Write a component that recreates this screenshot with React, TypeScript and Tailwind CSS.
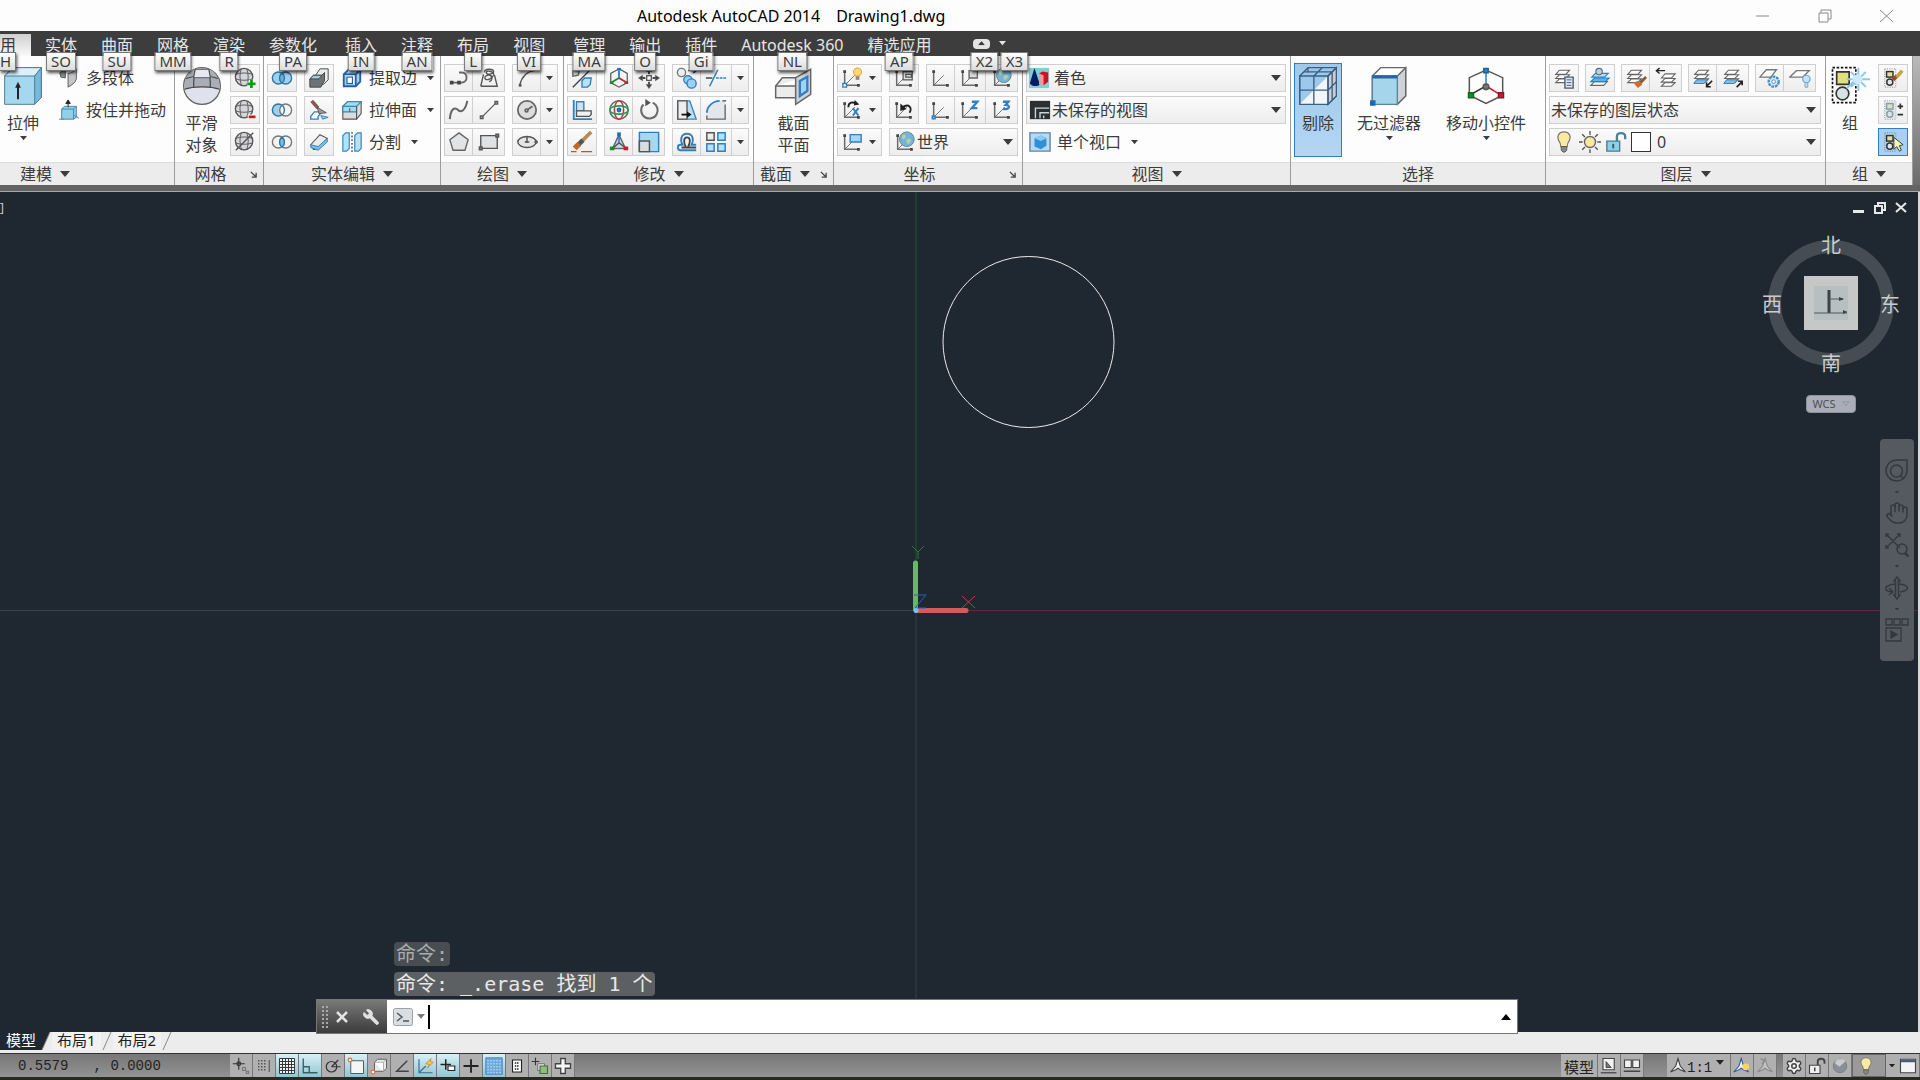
import { ReactNode } from "react";
import { Hand, Settings, Wrench } from "lucide-react";

const axes = (
  <g stroke="#6a6a6a" strokeWidth="1.6" fill="none">
    <path d="M4 4v16h16" />
    <path d="M4 20l11-11" strokeWidth="1" />
    <path d="M2.5 5h3M19 18.5v3" strokeWidth="3" stroke="#444" />
  </g>
);

const globe = (
  <>
    <circle cx="11" cy="11" r="9.500" fill="#d4d6da" stroke="#555" strokeWidth="1.4" />
    <path d="M2 8c5-2 13-2 18 0M1.500 13c6 2 13 2 19 0M8 2C6 8 6 12 8 20M14 2c2 6 2 12 0 18" fill="none" stroke="#555" />
  </>
);

const layers = (
  <g fill="#fff" stroke="#666" strokeWidth="1.200">
    <path d="M3 17l4-4h11l-4 4z" />
    <path d="M3 12.500l4-4h11l-4 4z" />
    <path d="M3 8l4-4.500h11L14 8z" />
  </g>
);

const selectShapes = (
  <>
    <rect x="3" y="2" width="12" height="20" fill="none" stroke="#777" strokeWidth="1" strokeDasharray="1 1.500" />
    <rect x="5" y="5" width="7" height="6" fill="#e3e09a" stroke="#333" strokeWidth="1.600" />
    <circle cx="8.500" cy="16.500" r="3.300" fill="#dfe6e8" stroke="#333" strokeWidth="1.600" />
  </>
);

const icons: Record<string, ReactNode> = {
  extrude: (
    <g strokeWidth=".6">
      <path d="M1 6l5-5h17v18l-4 4H1z" fill="#a5d8ee" stroke="#4c7f9c" />
      <path d="M1 6l5-5h17l-4 5z" fill="#d8f1fb" stroke="#4c7f9c" />
      <path d="M19 6l4-5v18l-4 4z" fill="#79b8d8" stroke="#4c7f9c" />
      <path d="M9 20V11" stroke="#222" strokeWidth="1.200" />
      <path d="M7.300 13L9 9.500l1.700 3.500z" fill="#222" />
    </g>
  ),
  polysolid: (
    <g fill="#c4c6c9" stroke="#555">
      <path d="M2 6l6-3v9l-5-1z" fill="#8a8d91" />
      <path d="M11 7c4 0 6-2 9-5v11c-1 4-4 6-9 9z" />
    </g>
  ),
  presspull: (
    <>
      <path d="M4 11l3-3h13v12l-3 2H4z" fill="#8fd0ec" stroke="#47809c" />
      <path d="M4 11h13v11M17 11l3-3M1 22h5M18 18l5 3" fill="none" stroke="#47809c" />
      <path d="M11 9V4M8.500 5L11 1l2.500 4z" fill="#222" stroke="#222" />
    </>
  ),
  smooth: (
    <>
      <circle cx="12" cy="12" r="11" fill="#dfe1ec" stroke="#666" strokeWidth=".8" />
      <path d="M1.500 14C1 5 6 1.200 12 1.200S23 5 22.500 14c-5-2-16-2-21 0z" fill="#a9adb6" />
      <path d="M8 2C7 5 7 9 7 13M16 2c1 3 1 7 1 11M2.500 7.500c5-2 14-2 19 0M1.500 14c5-2 16-2 21 0" fill="none" stroke="#444" strokeWidth=".7" />
      <path d="M8 2h8l1 5H7z" fill="#e8e9ee" stroke="#444" strokeWidth=".5" />
    </>
  ),
  meshAdd: (
    <>
      {globe}
      <path d="M19 14v9M14.500 18.500h9" stroke="#fff" strokeWidth="5" />
      <path d="M19 14v9M14.500 18.500h9" stroke="#0c9a1c" strokeWidth="3" />
    </>
  ),
  meshRemove: (
    <>
      {globe}
      <path d="M15 19.500h8.500" stroke="#fff" strokeWidth="5" />
      <path d="M16 19.500h7.500" stroke="#d1121f" strokeWidth="3" />
    </>
  ),
  meshOff: (
    <>
      {globe}
      <path d="M2 21L21 2" stroke="#555" strokeWidth="1.500" />
    </>
  ),
  union: (
    <g stroke="#3077a8" strokeWidth="1.500">
      <circle cx="8" cy="12" r="6.500" fill="#9fd0ee" />
      <circle cx="16" cy="12" r="6.500" fill="#9fd0ee" />
      <path d="M12 6.500a7 7 0 0 1 0 11a7 7 0 0 1 0-11z" fill="#6cb1dd" />
    </g>
  ),
  subtract: (
    <g strokeWidth="1.500">
      <circle cx="8" cy="12" r="6.500" fill="#9fd0ee" stroke="#3077a8" />
      <circle cx="16" cy="12" r="6.500" fill="#f5f5f5" stroke="#777" />
      <path d="M12 6.500a7 7 0 0 1 0 11" fill="none" stroke="#3077a8" />
    </g>
  ),
  intersect: (
    <g strokeWidth="1.500" stroke="#777" fill="none">
      <circle cx="8" cy="12" r="6.500" />
      <circle cx="16" cy="12" r="6.500" />
      <path d="M12 6.500a7 7 0 0 1 0 11a7 7 0 0 1 0-11z" fill="#7cc0ea" stroke="#2f77a8" />
    </g>
  ),
  interfere: (
    <g stroke="#444">
      <path d="M9 8l4-6h9v12l-5 5H9z" fill="#ececec" />
      <path d="M2 13l4-4h9l3-3v9l-4 7H2z" fill="#6f7276" />
      <path d="M2 13l4-4h9l-3 4z" fill="#9ccbe5" />
    </g>
  ),
  paintSolid: (
    <g>
      <path d="M3 19l4-5h8l-4 5v3H3z" fill="#fff" stroke="#2f7fc1" strokeWidth="1.500" />
      <path d="M14 18l8 2-6 2z" fill="#8fd0ec" stroke="#2f7fc1" />
      <path d="M4 2l7 8" stroke="#8a5a52" strokeWidth="4" />
      <path d="M10 9l10 6-8 1z" fill="#999" stroke="#555" />
    </g>
  ),
  chamfer: (
    <g stroke="#555">
      <path d="M3 15L13 4l8 4-10 12H6z" fill="#ececec" strokeWidth="1.200" />
      <path d="M3 15l8 2 10-9v4L11 21l-8-3z" fill="#79c1e8" stroke="#2f7fa8" />
    </g>
  ),
  edges: (
    <g fill="#fff" stroke="#1f5fae" strokeWidth="2">
      <path d="M3 8l5-5h13v13l-5 5H3z" fill="#a9cdf0" />
      <path d="M3 8h13v13M16 8l5-5" />
      <rect x="6.500" y="11" width="6" height="7" strokeWidth="1.300" />
    </g>
  ),
  extrudeFace: (
    <g stroke="#555" strokeWidth="1.200">
      <path d="M2 8l5-5h15v13l-5 6H2z" fill="#dcdcdc" />
      <path d="M2 8l5-5h15l-5 5zM2 8h15v6H2z" fill="#9fdcf4" stroke="#3b88a8" />
      <path d="M17 8v14M9.500 14V10" />
    </g>
  ),
  separate: (
    <g stroke="#3b88b8" strokeWidth="1.300" fill="#b5e2f6">
      <path d="M2 5l3-3h4v17l-3 3H2z" />
      <path d="M15 5l3-3h4v17l-3 3h-4z" />
      <path d="M12 1v22" stroke="#333" strokeDasharray="2 2" />
    </g>
  ),
  polyline: (
    <g fill="none" stroke="#666" strokeWidth="2">
      <path d="M4 17h11c7 0 7-11 0-11h-3" />
      <path d="M2 17h4M10 17h4" stroke="#444" strokeWidth="4" />
    </g>
  ),
  helix: (
    <g fill="none" stroke="#555" strokeWidth="1.500">
      <path d="M3 21h18L18 9M3 21L6 8" />
      <path d="M7 6c0-5 10-4 10-1s-8 4-8 1 10-1 8 3-7 6-9 4 2-5 5-4 3 6-1 7" />
    </g>
  ),
  arc: (
    <g fill="none" stroke="#555" strokeWidth="1.500">
      <path d="M4 20C6 12 11 5 20 4" />
      <path d="M3 20h3" strokeWidth="3" />
    </g>
  ),
  spline: <path d="M2 22C3 9 8 9 11 12s8 1 10-10" fill="none" stroke="#666" strokeWidth="2.200" />,
  line: (
    <g stroke="#555" strokeWidth="1.300" fill="#999">
      <path d="M4 20L20 4" />
      <path d="M2.500 18.500h3v3h-3zM18.500 2.500h3v3h-3z" />
    </g>
  ),
  circle: (
    <g stroke="#666" strokeWidth="1.900" fill="#ddd">
      <circle cx="12" cy="12" r="10" />
      <path d="M12 12l6-4" />
      <circle cx="11.500" cy="12.500" r="1.500" />
    </g>
  ),
  polygon: <path d="M12 2l10 7.500L18.500 21h-13L2 9.500z" fill="#e1e3e5" stroke="#666" strokeWidth="1.500" />,
  rect: (
    <g stroke="#555" strokeWidth="1.500" fill="#dfe1e3">
      <path d="M3 5h18v14H3z" />
      <path d="M1.500 17.500h3v3h-3zM19.500 3.500h3v3h-3z" fill="#888" />
    </g>
  ),
  ellipse: (
    <g stroke="#555" strokeWidth="1.600" fill="#e6e6e6">
      <ellipse cx="12" cy="12" rx="10" ry="6" />
      <path d="M12 6v7M9.500 12h5" />
      <circle cx="22" cy="12" r="1.200" />
    </g>
  ),
  mirror: (
    <g strokeWidth="1.500">
      <path d="M2 4h7l-1 5-6 1z" fill="#ddd" stroke="#666" />
      <path d="M2 22L21 3" stroke="#444" />
      <path d="M12 15l3-3h7l-1 7-3 3h-6z" fill="#b9e3f8" stroke="#2f7fc1" />
    </g>
  ),
  gizmoMove: (
    <g fill="none" stroke="#555" strokeWidth="1.300">
      <path d="M12 2l9 5v10l-9 5-9-5V7z" />
      <path d="M12 12V4" stroke="#1d6fc0" strokeWidth="1.800" />
      <path d="M12 12l7 4" stroke="#c1202f" strokeWidth="1.800" />
      <path d="M12 12l-7 4" stroke="#188a28" strokeWidth="1.800" />
      <path d="M10 2.500h4" stroke="#1d6fc0" strokeWidth="3" />
      <path d="M18 17h4" stroke="#c1202f" strokeWidth="3" />
      <path d="M2 17h4" stroke="#188a28" strokeWidth="3" />
    </g>
  ),
  move: (
    <g stroke="#444" strokeWidth="2" fill="#444">
      <path d="M12 5v3M12 16v3M5 12h3M16 12h3" />
      <path d="M12 .5l3 4.500H9zM12 23.500l3-4.500H9zM.5 12L5 9v6zM23.500 12L19 9v6z" strokeWidth=".5" />
      <rect x="9.500" y="9.500" width="5" height="5" fill="#fff" strokeWidth="1.300" />
    </g>
  ),
  align: (
    <g strokeWidth="1.500">
      <path d="M3 1v21h20" fill="none" stroke="#2f7fc1" strokeWidth="2" />
      <rect x="6" y="3" width="8" height="10" fill="#c7e4f5" stroke="#4279a5" />
      <path d="M6 13h16v4l-2 2H6z" fill="#f2f2f2" stroke="#555" />
    </g>
  ),
  gizmoRotate: (
    <g fill="none" strokeWidth="1.700">
      <circle cx="12" cy="12" r="10" stroke="#666" />
      <ellipse cx="12" cy="12" rx="5" ry="10" stroke="#c03a44" />
      <ellipse cx="12" cy="12" rx="10" ry="4.500" stroke="#2c9a52" />
      <circle cx="12" cy="12" r="1.800" fill="#3d83c6" stroke="#2f5f9c" />
    </g>
  ),
  rotate: (
    <g fill="none" stroke="#6b6b6b" strokeWidth="2.200">
      <path d="M6 6a9 9 0 1 0 10-2" />
      <path d="M8 0v8l6-4z" fill="#555" stroke="none" />
    </g>
  ),
  erase: (
    <>
      <path d="M10 13L22 1" stroke="#b58d58" strokeWidth="4" />
      <path d="M7 16l6-6" stroke="#555" strokeWidth="5" />
      <path d="M4 19l5-5" stroke="#c8642a" strokeWidth="6" />
      <path d="M0 22.500h6M11 22.500h12" stroke="#b5592b" strokeWidth="1.500" />
    </>
  ),
  gizmoScale: (
    <g fill="none" strokeWidth="1.600">
      <path d="M12 4L5 19h14z" stroke="#666" fill="#c7dced" />
      <path d="M12 13V4" stroke="#1d6fc0" />
      <path d="M12 13l-7 6M12 13l8 6" stroke="#555" />
      <path d="M10 3.500h4" stroke="#1d6fc0" strokeWidth="4" />
      <path d="M2 19h5" stroke="#188a28" strokeWidth="4" />
      <path d="M17 19h5" stroke="#c1202f" strokeWidth="4" />
    </g>
  ),
  scale: (
    <g strokeWidth="1.600">
      <path d="M1.500 1.500h21v21h-21z" fill="#a7d8f2" stroke="#2f7fc1" />
      <path d="M1.500 11h11v11.500h-11z" fill="#d7dde0" stroke="#555" />
    </g>
  ),
  copy: (
    <g strokeWidth="1.500">
      <circle cx="6" cy="6" r="4.500" fill="#eee" stroke="#777" />
      <circle cx="13" cy="14" r="4.500" fill="#9bd2f2" stroke="#2f7fc1" />
      <circle cx="17" cy="18" r="5" fill="#9bd2f2" stroke="#2f7fc1" />
      <path d="M13 4h8M19 1.500L22 4l-3 2.500" fill="none" stroke="#333" />
    </g>
  ),
  trim: (
    <g fill="none" strokeWidth="1.800">
      <path d="M1 12h7" stroke="#555" />
      <path d="M12 12h12" stroke="#2f7fc1" strokeDasharray="3 1" />
      <path d="M5 21l9-18" stroke="#2f7fc1" />
    </g>
  ),
  stretch: (
    <g strokeWidth="1.500">
      <path d="M2 2h13l7 20H2z" fill="#bce0f3" stroke="#3b88b8" />
      <path d="M2 2h10v20H2z" fill="#eee" stroke="#555" />
      <path d="M6 17h9" stroke="#111" strokeWidth="2" />
      <path d="M12 13.500l5 3.500-5 3.500z" fill="#111" />
    </g>
  ),
  fillet: (
    <g fill="#e4e7e9" strokeWidth="1.500">
      <path d="M2 22V17C2 9 9 2 17 2h5v20z" stroke="none" />
      <path d="M22 6v16H2v-4" fill="none" stroke="#666" />
      <path d="M2 15C2 8 9 2 16 2" fill="none" stroke="#2f7fc1" strokeWidth="2" />
      <path d="M19 2h4" stroke="#555" />
    </g>
  ),
  offset: (
    <g fill="none" strokeWidth="2">
      <path d="M22 15h-5c3-6 1-12-5-12S4 9 7 15H5a3 3 0 0 0 0 6h17" stroke="#2f7fc1" />
      <path d="M22 18H13c3-6 3-11-1-11s-4 6-1 11H6" stroke="#444" />
    </g>
  ),
  array: (
    <g fill="#b9e1f7" stroke="#2f7fc1" strokeWidth="1.600">
      <path d="M2 2h8v8H2z" fill="#eee" stroke="#555" />
      <path d="M14 2h8v8h-8zM2 14h8v8H2zM14 14h8v8h-8z" />
    </g>
  ),
  section: (
    <g stroke="#666" strokeWidth=".9">
      <path d="M1 12l4-5h12v6l-3 6H1z" fill="#ececec" />
      <path d="M1 12h13l3-5" fill="#fff" />
      <path d="M13 7l9-5v15l-9 6z" fill="#cfd3d8" />
      <path d="M15.500 9l4.500-2.500V15l-4.500 3z" fill="#a2d3f2" stroke="#2f7fc1" strokeWidth="1.400" />
    </g>
  ),
  ucsIcon: (
    <>
      {axes}
      <path d="M2 18h4v4H2z" fill="#fff" stroke="#2f7fc1" strokeWidth="1.500" />
      <path d="M16 8h4v6h-4z" fill="#888" />
      <circle cx="18" cy="5.500" r="4.500" fill="#ffd977" stroke="#e09c2a" />
    </>
  ),
  ucsX: (
    <>
      {axes}
      <path d="M8 9c0-6 5-6 9-4" fill="none" stroke="#222" strokeWidth="2" />
      <path d="M15 1l5 5-6 1z" fill="#222" />
      <path d="M13 10l6 8M19 10l-6 8" stroke="#2f7fc1" strokeWidth="2.200" />
    </>
  ),
  ucsView: (
    <>
      {axes}
      <path d="M10 4h12v8H10z" fill="#a9d6f3" stroke="#2f7fc1" strokeWidth="1.500" />
    </>
  ),
  ucsNamed: (
    <>
      {axes}
      <path d="M11 5h10v9H11zM14 8h6v3h-6z" fill="#ddd" stroke="#555" strokeWidth="1.300" />
    </>
  ),
  ucsPrev: (
    <>
      {axes}
      <path d="M10 9c8-5 11 1 8 6" fill="none" stroke="#222" strokeWidth="2" />
      <path d="M8 5v8l7-2z" fill="#222" />
    </>
  ),
  ucs: axes,
  ucsObject: (
    <>
      {axes}
      <path d="M11 4h9v8h-9z" fill="#ddd" stroke="#666" strokeWidth="1.500" />
    </>
  ),
  ucsWorld: (
    <>
      {axes}
      <circle cx="14" cy="9" r="8" fill="#75b4d8" stroke="#5f8088" />
      <path d="M9 5c3-3 5 1 3 3s-4 1-3-3zM14 9c4-2 6 1 3 4s-4-2-3-4z" fill="#b5cfa8" />
    </>
  ),
  ucsOrigin: (
    <>
      {axes}
      <path d="M2.500 18.500h3v3h-3z" fill="#7db9e6" stroke="#2f7fc1" strokeWidth="1.500" />
    </>
  ),
  ucsZ: (
    <>
      {axes}
      <path d="M14 3h6l-6 7h6" fill="none" stroke="#2f7fc1" strokeWidth="2.500" />
    </>
  ),
  ucs3: (
    <>
      {axes}
      <path d="M13 3h6l-3 3.500c6 0 4 6-3 4" fill="none" stroke="#2f7fc1" strokeWidth="2.500" />
    </>
  ),
  shaded: (
    <>
      <path d="M1 1h22v22H1z" fill="#7fd0d4" />
      <path d="M7 1l6 18c-3 3-9 2-11-1z" fill="#0a1c66" />
      <path d="M12 7l4-2 6 1v10l-5 4-5-1z" fill="#e99a9a" />
      <path d="M12 7l4-2 6 1-5 3zM17 9l5-3v10l-5 4z" fill="#d2101c" />
    </>
  ),
  viewThumb: (
    <>
      <path d="M1 2h22v20H1z" fill="#2c2f31" />
      <path d="M7 21v-11h15M12 21v-6h10M16 21v-3" fill="none" stroke="#cfd2d4" strokeWidth="1.500" />
    </>
  ),
  viewport: (
    <>
      <path d="M1 2h22v20H1z" fill="#b9d9ee" stroke="#5c87a8" strokeWidth="1.500" />
      <path d="M6 8l7-3 6 3v8l-6 4-7-3z" fill="#2f8fd8" />
      <path d="M6 8l7-3 6 3-6 3z" fill="#8ccbf5" />
    </>
  ),
  cull: (
    <g stroke="#3c5f80" strokeWidth=".8" fill="none">
      <path d="M1 6l5-5h17v17l-5 5H1z" fill="#9cc8ec" />
      <path d="M1 23L18 6v17z" fill="#f3f6f9" stroke="none" />
      <path d="M18 6l5-5v17l-5 5z" fill="#c9ced6" />
      <path d="M1 6h17v17H1zM9.500 6v17M1 14.500h17M6 1v3M9.500 6l5-5M18 6l5-5M20.500 3.500v17M3.500 3.500h17M18 14.500l5-5" />
    </g>
  ),
  noFilter: (
    <g stroke="#666" strokeWidth=".8">
      <path d="M2 6l5-5h15v17l-5 5H2z" fill="#fff" />
      <path d="M17 6l5-5v17l-5 5z" fill="#cfd3d9" />
      <path d="M2 6h15v17H2z" fill="#a5d5ea" stroke="#5b8399" />
      <path d="M2 6.500h15" stroke="#2068ae" strokeWidth="2" />
      <path d="M1 21h2.500v2.500H1z" fill="#2068ae" stroke="#2068ae" />
    </g>
  ),
  gizmoBig: (
    <g fill="none" stroke="#555" strokeWidth=".9">
      <path d="M12 2.500L22 7v10.500l-10 5-10-5V7z" />
      <path d="M12 12V3" stroke="#2f7fc1" />
      <path d="M12 12l9 5.500" stroke="#c1202f" />
      <path d="M12 12l-9 5" stroke="#333" />
      <path d="M10.700 1.500h2.600v2.600h-2.600z" fill="#2f7fc1" stroke="#1f5f9c" />
      <path d="M19.500 16h3v3h-3z" fill="#c1202f" stroke="#8a1822" />
      <path d="M1.500 16h3v3h-3z" fill="#188a28" stroke="#116a1c" />
      <circle cx="12" cy="12.500" r="1.700" fill="#777" />
    </g>
  ),
  layerProps: (
    <>
      {layers}
      <path d="M13 11h9v12h-9z" fill="#dbe6f2" stroke="#4a5c70" strokeWidth="1.500" />
      <path d="M15 14h5M15 17h5M15 20h5" stroke="#4a5c70" />
    </>
  ),
  layerIso: (
    <g stroke="#666" strokeWidth="1.200" fill="#fff">
      <path d="M2 20l4-4h14l-4 4z" />
      <path d="M2 16l4-4h16l-4 4z" fill="#5fb2e6" stroke="#2f7fc1" />
      <path d="M3 11l4-4h14l-4 4z" fill="#b7dff6" stroke="#2f7fc1" />
      <circle cx="11" cy="5" r="3.500" fill="#a9d6f3" />
    </g>
  ),
  layerMatch: (
    <>
      {layers}
      <path d="M23 11l-7 7" stroke="#8c5a30" strokeWidth="3" />
      <path d="M9 17l6-2 4 4-5 4z" fill="#c8702f" />
    </>
  ),
  layerPrev: (
    <>
      <g transform="translate(4 4)">{layers}</g>
      <path d="M2 4h9M5 1L1.500 4 5 7" fill="none" stroke="#222" strokeWidth="1.500" />
    </>
  ),
  layerOffIso: (
    <>
      {layers}
      <path d="M2 18l3-4h12l-4 4z" fill="#7dc0ea" stroke="#2f7fc1" />
      <path d="M22 15l-6 6M16 17v4.500h4.500" fill="none" stroke="#222" strokeWidth="1.800" />
    </>
  ),
  layerOnIso: (
    <>
      {layers}
      <path d="M2 18l3-4h12l-4 4z" fill="#7dc0ea" stroke="#2f7fc1" />
      <path d="M16 22l6-6M17.500 15.500H22V20" fill="none" stroke="#222" strokeWidth="1.800" />
    </>
  ),
  layerFreeze: (
    <>
      <path d="M1 11l7-8h11l-6 8z" fill="#fff" stroke="#777" strokeWidth="1.500" />
      <circle cx="16" cy="16" r="5.500" fill="#cfe7f6" stroke="#4c8fc0" strokeWidth="2.500" strokeDasharray="3 1" />
      <circle cx="16" cy="16" r="2" fill="#fff" stroke="#4c8fc0" />
    </>
  ),
  layerOff: (
    <>
      <path d="M1 11l7-7h14l-7 7z" fill="#fff" stroke="#777" strokeWidth="1.500" />
      <circle cx="19" cy="13" r="4" fill="#c4e3f6" stroke="#6fa3c8" strokeWidth="1.300" />
      <path d="M17.500 17h3v5h-3z" fill="#c4e3f6" stroke="#6fa3c8" />
    </>
  ),
  bulb: (
    <>
      <path d="M12 1c6 0 8 5 6 9-2 3-2.500 4-2.500 7h-7C8.500 14 8 13 6 10 4 6 6 1 12 1z" fill="#fbe9a2" stroke="#777" strokeWidth="1.300" />
      <path d="M9 17h6v4l-2 2h-2l-2-2z" fill="#888" stroke="#555" />
    </>
  ),
  sun: (
    <>
      <circle cx="12" cy="12" r="6" fill="#fbe9a2" stroke="#666" strokeWidth="1.500" />
      <path d="M12 0v4M12 20v4M0 12h4M20 12h4M3.500 3.500l3 3M17.500 17.500l3 3M3.500 20.500l3-3M17.500 6.500l3-3" stroke="#555" strokeWidth="1.500" />
    </>
  ),
  unlock: (
    <>
      <path d="M13 11V6c0-5 9-5 9 0v3" fill="none" stroke="#4f7f92" strokeWidth="2.500" />
      <path d="M2 11h14v11H2z" fill="#8ccfe6" stroke="#4a7c90" strokeWidth="1.500" />
      <path d="M9 14v5" stroke="#2c5a6c" strokeWidth="2" />
    </>
  ),
  unlockPlain: (
    <>
      <path d="M13 11V6c0-5 9-5 9 0v3" fill="none" stroke="#444" strokeWidth="2.500" />
      <path d="M2 11h14v11H2z" fill="#f0f0f0" stroke="#444" strokeWidth="1.500" />
      <path d="M9 14v5" stroke="#444" strokeWidth="2" />
    </>
  ),
  group: (
    <>
      <path d="M1.500 1h14v21h-14z" fill="none" stroke="#111" strokeDasharray="1.500 1" />
      <path d="M4 3.500h7.500V11H4z" fill="#dfe07a" stroke="#333" />
      <circle cx="7.500" cy="16.500" r="3.800" fill="#d8e4e4" stroke="#333" />
      <path d="M10 13.500l6-6M17 1v14M10 8h14M12.500 3.500l9 9M21.500 3.500l-9 9" stroke="#8fc9ea" strokeWidth="1.200" />
      <circle cx="16.500" cy="8" r="3" fill="#c9eafc" />
    </>
  ),
  ungroup: (
    <>
      {selectShapes}
      <path d="M12 14l4-4" stroke="#b5401f" strokeWidth="4" />
      <path d="M16 11l6-7" stroke="#c2a44a" strokeWidth="4" />
    </>
  ),
  groupEdit: (
    <>
      {selectShapes}
      <path d="M3 2h12v20H3z" fill="#cfe3ee" opacity=".6" />
      <path d="M17 8h6M20 5v6M17 17h6" stroke="#333" strokeWidth="1.800" />
    </>
  ),
  groupSelect: (
    <>
      {selectShapes}
      <path d="M13 7v13l3-3 3 5 2-1-2-5 4-1z" fill="#f7f5b4" stroke="#333" />
    </>
  ),
  snapInfer: (
    <g stroke="#333" strokeWidth="1.500" fill="none">
      <path d="M1 9h16M9 1v16" />
      <circle cx="9" cy="9" r="2.500" />
      <path d="M14 14h4v4h-4zM19 19h3v3h-3z" stroke="#777" />
    </g>
  ),
  snap: (
    <g stroke="#555" strokeWidth="2" strokeDasharray="2 2">
      <path d="M4 5h12M4 9h12M4 13h12M4 17h12" />
      <path d="M19 4v16" strokeDasharray="none" strokeWidth="1.500" />
    </g>
  ),
  grid: (
    <path d="M2 2h20v20H2zM6 2v20M10 2v20M14 2v20M18 2v20M2 6h20M2 10h20M2 14h20M2 18h20" fill="#eef6f8" stroke="#333" strokeWidth="1.300" />
  ),
  ortho: <path d="M3 2v19h19M3 13h8v8" fill="none" stroke="#3c5c6c" strokeWidth="1.800" />,
  polar: (
    <g fill="none" stroke="#333" strokeWidth="1.600">
      <circle cx="10" cy="13" r="7" />
      <path d="M10 13l9-9M10 13h12" />
    </g>
  ),
  osnap: (
    <>
      <path d="M5 5h17v17H5z" fill="#f5f5f5" stroke="#555" strokeWidth="1.300" />
      <circle cx="4" cy="4" r="2.500" fill="#fff" stroke="#e0703a" strokeWidth="1.500" />
    </>
  ),
  osnap3d: (
    <>
      <path d="M6 7l4-4h12v12l-4 4H6z" fill="#e9e9e9" stroke="#555" strokeWidth="1.200" />
      <path d="M6 7h12v12M18 7l4-4" fill="#fff" stroke="#999" />
      <circle cx="4" cy="20" r="2.500" fill="#fff" stroke="#e0703a" strokeWidth="1.500" />
    </>
  ),
  otrack: <path d="M19 5L5 19h16" fill="none" stroke="#444" strokeWidth="2" />,
  ducs: (
    <>
      <path d="M4 3v18h18M4 21l9-9" fill="none" stroke="#3f6f8c" strokeWidth="1.600" />
      <path d="M20 2l-7 7 5 1-3 5 8-8-4-1z" fill="#ffc34a" stroke="#c78320" />
    </>
  ),
  dyn: (
    <g stroke="#222" strokeWidth="2" fill="#fff">
      <path d="M2 10h14M9 3v14" />
      <path d="M12 12h9v6h-9z" strokeWidth="1.500" />
    </g>
  ),
  lwt: <path d="M2 12h20M12 3v18" stroke="#222" strokeWidth="2.500" />,
  transparency: (
    <>
      <path d="M1 1h22v22H1z" fill="#6ea9dc" stroke="#3876b0" />
      <path d="M3 5h18M3 9h18M3 13h18M3 17h18M3 21h18" stroke="#b5d5f0" strokeWidth="2" strokeDasharray="2 2" />
    </>
  ),
  quickProps: (
    <g fill="#fff" stroke="#222" strokeWidth="1.500">
      <path d="M6 4h12v16H6z" />
      <path d="M9 8h6M9 12h6M9 16h6" strokeDasharray="2 1" strokeWidth="2" />
    </g>
  ),
  cycling: (
    <>
      <path d="M1 6h10M6 1v10" stroke="#333" strokeWidth="1.500" />
      <path d="M9 9h9v9H9z" fill="#e8e8e8" stroke="#555" />
      <path d="M12 12h10v10H12z" fill="#8dbf7c" stroke="#3f6f34" strokeWidth="1.500" />
    </>
  ),
  annoMonitor: <path d="M9 2h6v7h7v6h-7v7H9v-7H2V9h7z" fill="#f7f7f7" stroke="#444" strokeWidth="1.800" />,
  layoutSheet: (
    <>
      <path d="M4 2h15v15H4z" fill="#f2f2f2" stroke="#444" strokeWidth="1.500" />
      <path d="M8 6l7 8H8z" fill="#777" stroke="#333" />
      <path d="M1 21h21" stroke="#555" strokeWidth="2" />
    </>
  ),
  quickView: (
    <g fill="#f2f2f2" stroke="#444" strokeWidth="1.500">
      <path d="M2 4h9v10H2zM13 4h9v10h-9z" />
      <path d="M1 19h22" strokeWidth="2" />
    </g>
  ),
  anno: <path d="M12 2l3 10 7 8-7-3-3-2-3 2-7 3 7-8z" fill="#f2f2f2" stroke="#444" strokeWidth="1.500" />,
  annoLit: (
    <>
      <path d="M11 2l3 10 7 8-7-3-3-2-3 2-7 3 7-8z" fill="#f2f2f2" stroke="#2f5f9c" strokeWidth="1.500" />
      <circle cx="17" cy="13" r="4.500" fill="#ffd35c" />
    </>
  ),
  annoAuto: (
    <g fill="#c4c4c4" stroke="#8a8a8a" strokeWidth="1.500">
      <path d="M12 2l3 10 7 8-7-3-3-2-3 2-7 3 7-8z" />
      <path d="M6 2l5 3-3 4" fill="none" />
    </g>
  ),
  hardware: (
    <>
      <circle cx="12" cy="12" r="9" fill="#8a9096" stroke="#777" />
      <path d="M5 8l6 5 8-7-2-3H8z" fill="#c8cbcf" />
    </>
  ),
  cleanScreen: (
    <>
      <path d="M2 3h20v18H2z" fill="#f4f4f4" stroke="#444" strokeWidth="1.500" />
      <path d="M2 5.500h20" stroke="#4a5c7c" strokeWidth="3" />
    </>
  ),
  wheel: (
    <g fill="none" strokeWidth="1.500">
      <path d="M12 1h10v11a10.500 10.500 0 1 1-10-11z" />
      <circle cx="11.500" cy="12" r="6" />
      <path d="M15 16l4 4" />
    </g>
  ),
  zoomExtents: (
    <g fill="none" strokeWidth="1.500">
      <path d="M1 1l14 14M15 1L1 15M1 4V1h3M12 1h3v3M1 12v3h3" />
      <circle cx="17" cy="16" r="5" />
      <path d="M20 20l3.500 3.500" strokeWidth="2.500" />
    </g>
  ),
  orbit: (
    <g fill="none" strokeWidth="1.500">
      <path d="M12 1l3 4h-1.500v14H15l-3 4-3-4h1.500V5H9z" />
      <path d="M10 8c-9 1-12 5-7 7l4 1M14 8c10 1 12 6 1 8M4 12l4 4-4 3" />
    </g>
  ),
  motion: (
    <g fill="none" strokeWidth="1.300">
      <path d="M1 1h6v6H1zM9 1h6v6H9zM17 1h6v6h-6zM1 10h15v13H1z" />
      <path d="M6 13l6 3.500L6 20z" fill="#33393e" />
    </g>
  ),
};

function Icon({ name, className = "size-[22px]" }: { name: string; className?: string }) {
  return (
    <svg viewBox="0 0 24 24" className={`shrink-0 ${className}`} fill="none" aria-hidden="true">
      {icons[name]}
    </svg>
  );
}

function Caret({ className = "w-[7px]" }: { className?: string }) {
  return (
    <svg viewBox="0 0 10 6" className={`shrink-0 ${className}`} aria-hidden="true">
      <path d="M0 0h10L5 6z" fill="currentColor" />
    </svg>
  );
}

function KeyTip({ children }: { children: string }) {
  return (
    <span className="absolute top-[21px] left-1/2 z-20 h-[19px] -translate-x-1/2 border border-[#777] bg-gradient-to-b from-white to-[#dcdcdc] px-1 text-[15px] leading-4 text-[#3c3c3c] shadow-[1px_2px_3px_rgba(0,0,0,0.7)]">
      {children}
    </span>
  );
}

function Tools({ names, drop = false }: { names: string[]; drop?: boolean }) {
  return (
    <div className="flex h-7 w-fit divide-x divide-[#cfcfcf] border border-[#cfcfcf] bg-gradient-to-b from-[#fbfbfb] to-[#ededed]">
      {names.map((name, i) => (
        <button key={name} aria-label={name} className={`flex items-center justify-center ${i === 0 ? "w-7" : "w-[31px]"}`}>
          <Icon name={name} />
        </button>
      ))}
      {drop && (
        <button aria-label="more" className="flex w-4 items-center justify-center">
          <Caret />
        </button>
      )}
    </div>
  );
}

function DropTool({ name }: { name: string }) {
  return (
    <button
      aria-label={name}
      className="flex h-7 w-[45px] items-center gap-1.5 border border-[#cfcfcf] bg-gradient-to-b from-[#fbfbfb] to-[#ededed] pl-[3px]"
    >
      <Icon name={name} />
      <Caret />
    </button>
  );
}

function TextTool({ name, text, drop = false }: { name: string; text: string; drop?: boolean }) {
  return (
    <button className="flex h-7 items-center gap-1.5 whitespace-nowrap">
      <Icon name={name} />
      {text}
      {drop && <Caret className="ml-1 w-[7px]" />}
    </button>
  );
}

function BigTool({ name, lines, drop = false, className = "" }: { name: string; lines: string[]; drop?: boolean; className?: string }) {
  return (
    <button className={`flex shrink-0 flex-col items-center pt-0.5 ${className}`}>
      <Icon name={name} className="size-10" />
      <span className="mt-1.5 flex flex-col leading-[22px] whitespace-nowrap">
        {lines.map((line) => (
          <span key={line}>{line}</span>
        ))}
      </span>
      {drop && <Caret className="mt-0.5 w-[7px]" />}
    </button>
  );
}

function Combo({ label, value, children, className = "" }: { label: string; value: string; children?: ReactNode; className?: string }) {
  return (
    <div
      className={`relative flex h-7 items-center border border-[#cfcfcf] bg-gradient-to-b from-[#fbfbfb] to-[#ededed] ${className}`}
    >
      {children}
      <select aria-label={label} className="h-full min-w-0 flex-1 appearance-none bg-transparent outline-none">
        <option>{value}</option>
      </select>
      <Caret className="pointer-events-none absolute right-1 w-[10px]" />
    </div>
  );
}

function Panel({ title, menu = false, launcher = false, className = "", children }: { title: string; menu?: boolean; launcher?: boolean; className?: string; children: ReactNode }) {
  return (
    <section className={`flex flex-col border-r border-[#9c9c9c] ${className}`}>
      <div className="flex h-[106px] gap-[7px] bg-[#fdfdfd] pt-2 pl-[3px]">{children}</div>
      <div className="flex h-[23px] items-center border-t border-[#dcdcdc] bg-[#ececec]">
        <button className="flex flex-1 items-center justify-center gap-2 leading-5 whitespace-nowrap">
          {title}
          {menu && <Caret className="w-[10px]" />}
        </button>
        {launcher && (
          <button aria-label={`${title} launcher`} className="mr-1.5 ml-1">
            <svg viewBox="0 0 8 8" className="size-[7px]" fill="none" stroke="#444" strokeWidth="1.500">
              <path d="M1 1l5 5M7 2v5H2" />
            </svg>
          </button>
        )}
      </div>
    </section>
  );
}

const Column = ({ children, className = "" }: { children: ReactNode; className?: string }) => (
  <div className={`flex flex-col gap-1 ${className}`}>{children}</div>
);

const tabGroups = [
  [
    ["实体", "SO"],
    ["曲面", "SU"],
    ["网格", "MM"],
    ["渲染", "R"],
    ["参数化", "PA"],
  ],
  [
    ["插入", "IN"],
    ["注释", "AN"],
    ["布局", "L"],
    ["视图", "VI"],
  ],
  [
    ["管理", "MA"],
    ["输出", "O"],
    ["插件", "Gi"],
    ["Autodesk 360", "NL"],
    ["精选应用", "AP"],
  ],
];

function Tab({ text, tip }: { text: string; tip: string }) {
  return (
    <button className="relative px-3 pt-0.5 leading-6 whitespace-nowrap text-[#e6e6e6]">
      {text}
      <KeyTip>{tip}</KeyTip>
    </button>
  );
}

function TitleBar() {
  return (
    <header className="relative flex h-[31px] shrink-0 items-center bg-[#fdfdfd]">
      <h1 className="ml-[637px] flex gap-4 whitespace-nowrap text-black">
        <span>Autodesk AutoCAD 2014</span>
        <span>Drawing1.dwg</span>
      </h1>
      <div className="mr-[26px] ml-auto flex gap-12 text-[#888]">
        {["M0 7h13", "M1 4h9v9H1zM3 4V1h10v9h-3", "M0 1l13 12M13 1L0 13"].map((d, i) => (
          <button key={d} aria-label={["minimize", "restore", "close"][i]}>
            <svg viewBox="0 0 14 14" className="size-[14px]" fill="none" stroke="currentColor">
              <path d={d} />
            </svg>
          </button>
        ))}
      </div>
    </header>
  );
}

function TabBar() {
  return (
    <nav className="flex h-[25px] shrink-0 bg-[#3d3d3d]">
      <button className="relative mt-[3px] mr-0.5 w-[31px] bg-gradient-to-b from-[#cfcfcf] to-[#fafafa] text-left leading-[21px]">
        用
        <span className="absolute top-[18px] left-0 z-20 h-[19px] border border-l-0 border-[#777] bg-gradient-to-b from-white to-[#dcdcdc] pr-1 text-[15px] leading-4 shadow-[1px_2px_3px_rgba(0,0,0,0.7)]">
          H
        </span>
      </button>
      <div className="flex gap-1">
        {tabGroups.map((group, i) => (
          <div key={i} className="flex">
            {group.map(([text, tip]) => (
              <Tab key={tip} text={text} tip={tip} />
            ))}
          </div>
        ))}
      </div>
      <button aria-label="collapse ribbon" className="relative ml-[30px] w-[22px]">
        <span className="flex h-[10px] w-[17px] items-center justify-center rounded-sm bg-[#e4e4e4]">
          <Caret className="w-[7px] rotate-180" />
        </span>
        <KeyTip>X2</KeyTip>
      </button>
      <button aria-label="ribbon options" className="relative ml-1 w-[30px] text-[#e4e4e4]">
        <Caret className="w-[7px]" />
        <KeyTip>X3</KeyTip>
      </button>
    </nav>
  );
}

function Ribbon() {
  return (
    <div className="flex shrink-0 overflow-hidden bg-[#6b6b6b]">
      <Panel title="建模" menu className="w-[175px] shrink-0 [&>div:last-child]:pr-[84px]">
        <BigTool name="extrude" lines={["拉伸"]} drop className="w-10" />
        <Column className="ml-2">
          <TextTool name="polysolid" text="多段体" />
          <TextTool name="presspull" text="按住并拖动" />
        </Column>
      </Panel>
      <Panel title="网格" launcher className="w-[89px] shrink-0">
        <BigTool name="smooth" lines={["平滑", "对象"]} className="w-[45px] pl-0.5" />
        <Column>
          <Tools names={["meshAdd"]} />
          <Tools names={["meshRemove"]} />
          <Tools names={["meshOff"]} />
        </Column>
      </Panel>
      <Panel title="实体编辑" menu className="w-[177px] shrink-0">
        <Column>
          <Tools names={["union"]} />
          <Tools names={["subtract"]} />
          <Tools names={["intersect"]} />
        </Column>
        <Column>
          <Tools names={["interfere"]} />
          <Tools names={["paintSolid"]} />
          <Tools names={["chamfer"]} />
        </Column>
        <Column>
          <TextTool name="edges" text="提取边" drop />
          <TextTool name="extrudeFace" text="拉伸面" drop />
          <TextTool name="separate" text="分割" drop />
        </Column>
      </Panel>
      <Panel title="绘图" menu className="w-[123px] shrink-0">
        <Column>
          <Tools names={["polyline", "helix"]} />
          <Tools names={["spline", "line"]} />
          <Tools names={["polygon", "rect"]} />
        </Column>
        <Column>
          <Tools names={["arc"]} drop />
          <Tools names={["circle"]} drop />
          <Tools names={["ellipse"]} drop />
        </Column>
      </Panel>
      <Panel title="修改" menu className="w-[190px] shrink-0">
        <Column>
          <Tools names={["mirror"]} />
          <Tools names={["align"]} />
          <Tools names={["erase"]} />
        </Column>
        <Column>
          <Tools names={["gizmoMove", "move"]} />
          <Tools names={["gizmoRotate", "rotate"]} />
          <Tools names={["gizmoScale", "scale"]} />
        </Column>
        <Column>
          <Tools names={["copy", "trim"]} drop />
          <Tools names={["stretch", "fillet"]} drop />
          <Tools names={["offset", "array"]} drop />
        </Column>
      </Panel>
      <Panel title="截面" menu launcher className="w-20 shrink-0">
        <BigTool name="section" lines={["截面", "平面"]} className="w-[73px]" />
      </Panel>
      <Panel title="坐标" launcher className="w-[189px] shrink-0">
        <Column>
          <DropTool name="ucsIcon" />
          <DropTool name="ucsX" />
          <DropTool name="ucsView" />
        </Column>
        <Column>
          <div className="flex gap-[7px]">
            <Tools names={["ucsNamed"]} />
            <Tools names={["ucs", "ucsObject", "ucsWorld"]} />
          </div>
          <div className="flex gap-[7px]">
            <Tools names={["ucsPrev"]} />
            <Tools names={["ucsOrigin", "ucsZ", "ucs3"]} />
          </div>
          <Combo label="UCS" value="世界" className="gap-px pl-1">
            <Icon name="ucsWorld" />
          </Combo>
        </Column>
      </Panel>
      <Panel title="视图" menu className="min-w-[200px] flex-1">
        <Column className="mr-1 flex-1">
          <Combo label="视觉样式" value="着色" className="gap-1 pl-px">
            <Icon name="shaded" />
          </Combo>
          <Combo label="视图" value="未保存的视图" className="gap-px pl-0.5">
            <Icon name="viewThumb" />
          </Combo>
          <div className="pl-[3px]">
            <TextTool name="viewport" text="单个视口" drop />
          </div>
        </Column>
      </Panel>
      <Panel title="选择" className="w-[255px] shrink-0">
        <BigTool name="cull" lines={["剔除"]} className="-mt-px h-[94px] w-12 border border-[#2f7fc1] bg-gradient-to-b from-[#9fc9ec] to-[#b4d6f3]" />
        <BigTool name="noFilter" lines={["无过滤器"]} drop className="w-20" />
        <BigTool name="gizmoBig" lines={["移动小控件"]} drop className="w-[100px]" />
      </Panel>
      <Panel title="图层" menu className="w-[280px] shrink-0">
        <Column className="mr-1 flex-1">
          <div className="flex gap-1.5">
            <Tools names={["layerProps"]} />
            <Tools names={["layerIso"]} />
            <Tools names={["layerMatch", "layerPrev"]} />
            <Tools names={["layerOffIso", "layerOnIso"]} />
            <Tools names={["layerFreeze", "layerOff"]} />
          </div>
          <Combo label="图层状态" value="未保存的图层状态" className="pl-px" />
          <Combo label="图层" value="0" className="gap-1 pl-[3px]">
            <Icon name="bulb" />
            <Icon name="sun" />
            <Icon name="unlock" />
            <span className="mr-0.5 size-5 border border-[#333] bg-white" />
          </Combo>
        </Column>
      </Panel>
      <Panel title="组" menu className="w-[87px] shrink-0">
        <BigTool name="group" lines={["组"]} className="w-[42px]" />
        <Column>
          <Tools names={["ungroup"]} />
          <Tools names={["groupEdit"]} />
          <button aria-label="groupSelect" className="flex h-7 w-[30px] items-center justify-center border border-[#2f7fc1] bg-[#a9d0f2]">
            <Icon name="groupSelect" />
          </button>
        </Column>
      </Panel>
      <div className="w-[7px] shrink-0 bg-gradient-to-b from-[#bbb] to-[#6b6b6b]" />
    </div>
  );
}

function ViewCube() {
  return (
    <div className="absolute top-[39px] right-[15px] flex w-36 flex-col items-center">
      <div className="grid h-36 w-36 grid-cols-[26px_1fr_26px] grid-rows-[26px_1fr_26px] place-items-center text-xl leading-none text-[#c9ccce] [&>span]:pt-1">
        <svg viewBox="0 0 144 144" className="col-span-3 col-start-1 row-span-3 row-start-1 size-36" fill="none">
          <circle cx="72" cy="72" r="56.500" stroke="#454c54" strokeWidth="13" />
          <path d="M45 45h54v54H45z" fill="#c6c7c7" />
          <path d="M55 55h34v34H55z" fill="#b6bfc2" />
          <path d="M70 59v23" stroke="#3e4245" strokeWidth="3" />
          <path d="M55 82h33M70 68h14M80 68h4M84 81h4" stroke="#55595c" />
          <path d="M80 66l5 2-5 2zM84 79l4 2-4 2z" fill="#3e4245" />
        </svg>
        <span className="col-start-2 row-start-1">北</span>
        <span className="col-start-1 row-start-2">西</span>
        <span className="col-start-3 row-start-2">东</span>
        <span className="col-start-2 row-start-3">南</span>
      </div>
      <button className="mt-5 flex h-[18px] w-[50px] items-center justify-center gap-1.5 rounded border border-[#8c929e] bg-[#a9aeb8] text-[11px] text-[#4b5058]">
        WCS
        <svg viewBox="0 0 10 7" className="w-2" fill="none" stroke="#8a8f99">
          <path d="M1 1h8L5 6z" />
        </svg>
      </button>
    </div>
  );
}

function NavBar() {
  return (
    <aside className="absolute top-[247px] right-1 flex h-[222px] w-[34px] flex-col items-center gap-2 rounded bg-[#545a5f] pt-5 text-[#33393e] [&_svg]:stroke-[#33393e]">
      <button aria-label="wheel"><Icon name="wheel" className="size-6" /></button>
      <Caret className="w-1" />
      <button aria-label="pan"><Hand className="size-6" strokeWidth={1.5} /></button>
      <button aria-label="zoom"><Icon name="zoomExtents" className="size-6" /></button>
      <Caret className="w-1" />
      <button aria-label="orbit"><Icon name="orbit" className="size-6" /></button>
      <Caret className="w-1" />
      <button aria-label="motion"><Icon name="motion" className="size-6" /></button>
    </aside>
  );
}

function CommandLine() {
  return (
    <div className="absolute right-[400px] -bottom-0.5 left-[316px] z-10">
      <div className="mb-[3px] ml-[78px] flex flex-col items-start gap-1.5 font-['DejaVu_Sans_Mono','Noto_Sans_CJK_SC',monospace] text-xl leading-6 whitespace-pre">
        <p className="rounded-sm bg-[#474d51] px-0.5 text-[#a9abac]">命令:</p>
        <p className="rounded-sm bg-[#5d6062] px-0.5 text-[#e8e8e8]">命令: _.erase 找到 1 个</p>
      </div>
      <div className="flex h-[35px] border border-[#777] bg-white">
        <div className="flex w-[70px] items-center bg-gradient-to-b from-[#7a7a7a] to-[#3c3c3c] pl-1 text-[#e2e2e2]">
          <svg viewBox="0 0 8 24" className="h-6 w-2" stroke="#a8a8a8" strokeWidth="2" strokeDasharray="2 2">
            <path d="M2 1v22M6 1v22" />
          </svg>
          <button aria-label="close" className="ml-[7px]">
            <svg viewBox="0 0 12 12" className="size-3" stroke="currentColor" strokeWidth="2.500">
              <path d="M1 1l10 10M11 1L1 11" />
            </svg>
          </button>
          <button aria-label="customize" className="ml-3.5">
            <Wrench className="size-[18px] -scale-x-100" fill="#e2e2e2" strokeWidth={1} />
          </button>
        </div>
        <button className="ml-1.5 flex items-center gap-1 text-[#777]" aria-label="recent commands">
          <svg viewBox="0 0 20 18" className="h-[18px] w-5" fill="#d9dee3" stroke="#9aa1a8">
            <rect x=".5" y=".5" width="19" height="17" rx="2" />
            <path d="M4 5l5 4-5 4M10 13h6" fill="none" stroke="#555" strokeWidth="1.500" />
          </svg>
          <Caret className="w-2" />
        </button>
        <div className="ml-[3px] w-0.5 self-center bg-black py-3" />
        <input aria-label="命令" className="min-w-0 flex-1 bg-transparent px-1 outline-none" />
        <button aria-label="history" className="mr-1.5 text-black">
          <Caret className="w-2.5 rotate-180" />
        </button>
      </div>
    </div>
  );
}

function Canvas() {
  return (
    <main className="relative min-h-0 flex-1 border-r-2 border-[#d8d8d8] bg-[#1f2830]">
      <svg className="absolute inset-0 h-full w-full" fill="none">
        <path d="M916 0v418" stroke="#21512a" />
        <line x1="916" y1="418" x2="916" y2="100%" stroke="#343c43" />
        <path d="M0 418.500h916" stroke="#3a4148" />
        <line x1="916" y1="418.500" x2="100%" y2="418.500" stroke="#5a2c35" />
        <circle cx="1028.500" cy="150" r="85.500" stroke="#e9ebec" />
        <path d="M915.500 371v46" stroke="#62bb5c" strokeWidth="5" strokeLinecap="round" />
        <path d="M917 418.500h49" stroke="#d25c5c" strokeWidth="5" strokeLinecap="round" />
        <path d="M912 354l6 6 6-6M918 360v7" stroke="#2a7a35" />
        <path d="M962 404l13 12M975 404l-13 12" stroke="#c23c46" />
        <path d="M914 403h12l-11 13h11" stroke="#2463b8" />
        <circle cx="916" cy="418.500" r="2.500" fill="#7cc0f0" />
      </svg>
      <span className="absolute top-1.5 left-0 text-xs leading-5 text-[#ccc]">]</span>
      <div className="absolute top-2.5 right-[11px] flex items-center gap-[9px]">
        {["M0 8h11v3H0z", "M1 4h7v7H1zM4 3V1h7v7H9", "M1 1l10 9M11 1L1 10"].map((d, i) => (
          <button key={d} aria-label={["minimize drawing", "restore drawing", "close drawing"][i]}>
            <svg viewBox="0 0 12 12" className="size-3" fill={i === 0 ? "#e8e8e8" : "none"} stroke={i === 0 ? "none" : "#e8e8e8"} strokeWidth="2">
              <path d={d} />
            </svg>
          </button>
        ))}
      </div>
      <ViewCube />
      <NavBar />
      <CommandLine />
    </main>
  );
}

function LayoutTabs() {
  return (
    <div className="flex h-[21px] shrink-0 items-start bg-[#ececec] text-[15px] leading-4 text-[#222]">
      <button className="h-[18px] bg-[#1f2830] pr-1 pb-0.5 pl-1.5 text-white">模型</button>
      {["布局1", "布局2"].map((text, i) => (
        <div key={text} className="flex">
          <svg viewBox="0 0 12 18" className="h-[18px] w-3" aria-hidden="true">
            {i === 0 && <path d="M0 0h10L2 18H0z" fill="#1f2830" />}
            <path d="M10 0L2 18" stroke="#888" />
          </svg>
          <button className="bg-[#f2f2f2] px-[5px] pb-0.5">{text}</button>
        </div>
      ))}
      <svg viewBox="0 0 12 18" className="h-[18px] w-3" aria-hidden="true">
        <path d="M10 0L2 18" stroke="#888" />
      </svg>
    </div>
  );
}

const drafting = [
  ["snapInfer", false],
  ["snap", false],
  ["grid", true],
  ["ortho", true],
  ["polar", false],
  ["osnap", true],
  ["osnap3d", false],
  ["otrack", false],
  ["ducs", true],
  ["dyn", true],
  ["lwt", false],
  ["transparency", true],
  ["quickProps", false],
  ["cycling", false],
  ["annoMonitor", false],
] as [string, boolean][];

function StatusTool({ name }: { name: string }) {
  return (
    <button aria-label={name} className="flex w-[23px] items-center justify-center border-r border-[#777] bg-[#b0b0b0]">
      <Icon name={name} className="size-[18px]" />
    </button>
  );
}

function StatusBar() {
  return (
    <footer className="flex h-[27px] shrink-0 border-t border-b-[3px] border-t-[#333] border-b-[#252b1e] bg-gradient-to-b from-[#777] to-[#939393] text-[#222]">
      <output className="w-[230px] pl-[18px] font-['Liberation_Mono',monospace] text-sm leading-6 whitespace-pre">
        {"0.5579   , 0.0000"}
      </output>
      {drafting.map(([name, on]) => (
        <button
          key={name}
          aria-label={name}
          aria-pressed={on}
          className={`flex w-[23px] items-center justify-center border-r border-[#777] ${on ? "bg-gradient-to-b from-[#d8f0f5] to-[#8fc6d4]" : "bg-[#b0b0b0]"}`}
        >
          <Icon name={name} className="size-[18px]" />
        </button>
      ))}
      <div className="ml-auto flex">
        <button className="border-r border-[#777] bg-[#b0b0b0] px-[3px] text-[15px] leading-[26px]">模型</button>
        <StatusTool name="layoutSheet" />
        <StatusTool name="quickView" />
        <span className="w-[23px]" />
        <button className="flex w-16 items-center border-r border-[#777] bg-[#b0b0b0] pl-0.5 font-['Liberation_Mono',monospace] text-sm">
          <Icon name="anno" className="size-[18px]" />
          <span className="pt-1">1:1</span>
          <Caret className="mb-1.5 ml-1 w-2" />
        </button>
        <StatusTool name="annoLit" />
        <StatusTool name="annoAuto" />
        <span className="w-1.5" />
        <button aria-label="workspace" className="flex w-[23px] items-center justify-center border-r border-[#777] bg-[#b0b0b0]">
          <Settings className="size-[18px]" fill="#f2f2f2" stroke="#444" />
        </button>
        <StatusTool name="unlockPlain" />
        <StatusTool name="hardware" />
        <button aria-label="isolate" className="flex w-[34px] items-center justify-center border border-[#666] bg-[#9a9a9a] pr-1.5">
          <Icon name="bulb" className="size-[18px]" />
        </button>
        <button aria-label="status menu" className="flex w-[11px] items-center justify-center bg-[#b0b0b0]">
          <Caret className="w-1.5" />
        </button>
        <StatusTool name="cleanScreen" />
      </div>
    </footer>
  );
}

export default function App() {
  return (
    <div className="flex h-screen flex-col overflow-hidden bg-[#ececec] font-['Noto_Sans','Noto_Sans_CJK_SC',sans-serif] text-base text-[#3c3c3c]">
      <TitleBar />
      <TabBar />
      <Ribbon />
      <div className="h-[7px] shrink-0 border-b border-[#a8a8a8] bg-[#636363]" />
      <Canvas />
      <LayoutTabs />
      <StatusBar />
    </div>
  );
}
